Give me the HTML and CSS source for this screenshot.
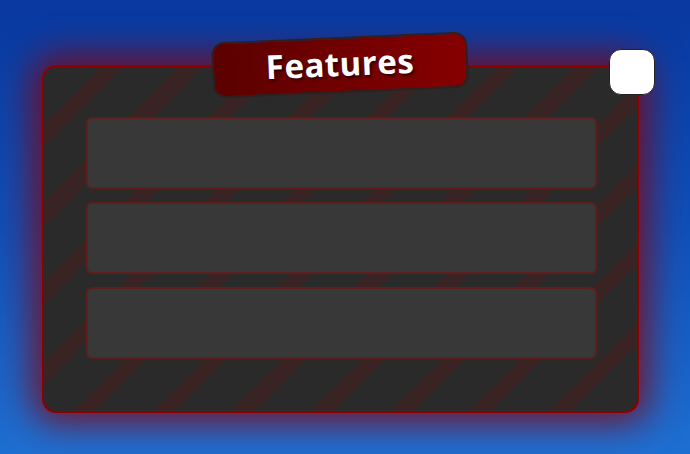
FILE: index.html
```html
<!DOCTYPE html>
<html>
<head>
<meta charset="utf-8">
<link rel="stylesheet" href="styles.css">
</head>
<body>
<div class="panel">
  <div class="title">Features</div>
  <div class="close"></div>
  <div class="rows">
    <div class="row"></div>
    <div class="row"></div>
    <div class="row"></div>
  </div>
</div>
</body>
</html>
```
FILE: styles.css
```css
html, body {
  margin: 0;
  padding: 0;
}
body {
  width: 690px;
  height: 454px;
  overflow: hidden;
  background: linear-gradient(to bottom, #0838a0 0%, #0f4fb8 50%, #1e6fd2 100%);
  font-family: "Open Sans", "Liberation Sans", sans-serif;
  padding-top: 65px;
  padding-left: 42px;
  box-sizing: border-box;
}
.panel {
  position: relative;
  width: 597px;
  height: 348px;
  box-sizing: border-box;
  border: 2px solid #8b0000;
  border-radius: 14px;
  background-color: #2a2a2a;
  background-image: repeating-linear-gradient(135deg, transparent 0 40px, rgba(139, 0, 0, 0.17) 40px 56px);
  box-shadow: 0 0 36px 10px rgba(139, 0, 0, 0.8);
  padding: 50px 40px 0 42px;
}
.rows {
  display: flex;
  flex-direction: column;
  gap: 13px;
}
.row {
  height: 72px;
  box-sizing: border-box;
  border: 2px solid rgba(139, 0, 0, 0.45);
  border-radius: 6px;
  background: #383838;
}
.title {
  position: absolute;
  left: 168px;
  top: -30px;
  width: 256px;
  height: 56px;
  box-sizing: border-box;
  border: 2px solid #2e2020;
  border-radius: 13px;
  background: linear-gradient(to right, #5c0000, #860000);
  transform: rotate(-2.5deg);
  color: #fff;
  font-size: 33px;
  font-weight: 700;
  text-align: center;
  line-height: 50px;
  text-shadow: 2px 2px 3px rgba(0, 0, 0, 0.6);
  letter-spacing: 0.5px;
}
.close {
  position: absolute;
  left: 565px;
  top: -18px;
  width: 46px;
  height: 46px;
  box-sizing: border-box;
  background: #fff;
  border: 1px solid #222;
  border-radius: 12px;
}
```
